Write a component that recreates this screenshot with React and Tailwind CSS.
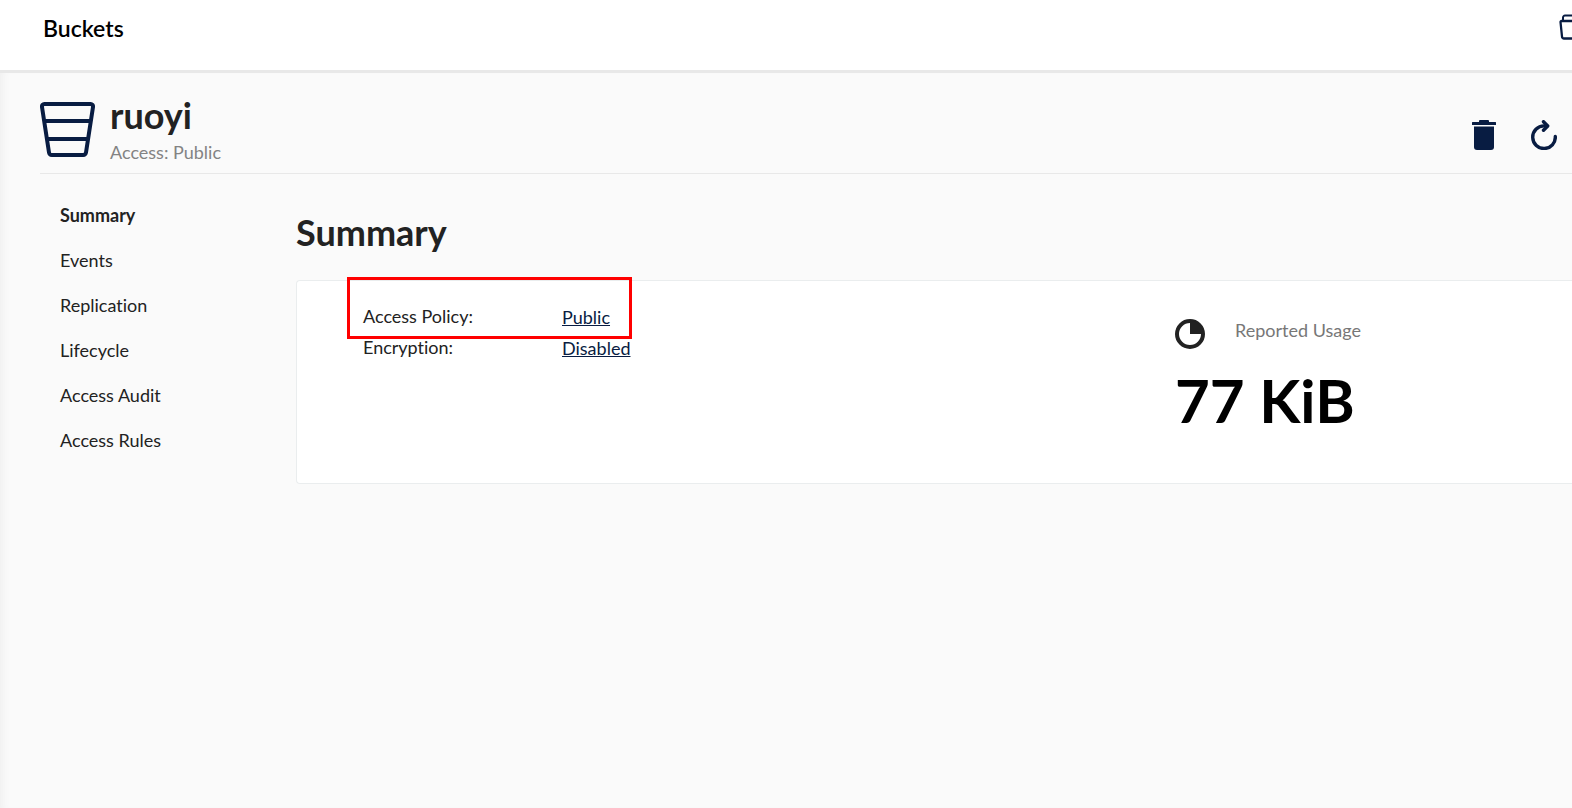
import React, { useState } from "react";

const navItems = [
  "Summary",
  "Events",
  "Replication",
  "Lifecycle",
  "Access Audit",
  "Access Rules",
];

const BucketIcon = () => (
  <svg width="55" height="55" viewBox="0 0 55 55" fill="none" stroke="#081c42" strokeWidth="4" strokeLinejoin="round">
    <path d="M4.5 2h46a2.5 2.5 0 0 1 2.5 3l-7 45.500a3 3 0 0 1-3 2.500H12a3 3 0 0 1-3-2.500L2 5a2.500 2.500 0 0 1 2.500-3z" />
    <path d="M4 19h47M7 37h41" />
  </svg>
);

const TrashIcon = () => (
  <svg width="24" height="30" viewBox="0 0 24 30" fill="#081c42">
    <path d="M7 1a1 1 0 0 1 1-1h8a1 1 0 0 1 1 1v1h6.500a.5.5 0 0 1 .5.5V5H0V2.500A.5.5 0 0 1 .5 2H7z" />
    <path d="M2 6.500h20V27a3 3 0 0 1-3 3H5a3 3 0 0 1-3-3z" />
  </svg>
);

const RefreshIcon = () => (
  <svg width="26" height="30" viewBox="0 0 26 30" fill="none" stroke="#081c42">
    <path d="M24.300 16.500A11.300 11.300 0 1 1 13 5.900h3" strokeWidth="3.400" strokeLinecap="round" />
    <path d="M12.500 1.700l4.200 4.300-4.200 4.300" strokeWidth="3.400" strokeLinecap="round" strokeLinejoin="round" />
  </svg>
);

const FilesIcon = () => (
  <svg width="30" height="26" viewBox="0 0 30 26" fill="none" stroke="#081c42" strokeWidth="2" strokeLinejoin="round">
    <path d="M4 7V3.500A2 2 0 0 1 6 1.500H15l3 2.500h8v3" />
    <path d="M2.500 7h25a1 1 0 0 1 1 1L27 22.500a2 2 0 0 1-2 2H5a2 2 0 0 1-2-2L1.500 8a1 1 0 0 1 1-1z" strokeWidth="2.300" />
  </svg>
);

const UsageIcon = () => (
  <svg width="30" height="30" viewBox="0 0 30 30">
    <circle cx="15" cy="15" r="13" fill="none" stroke="#222" strokeWidth="4" />
    <path d="M15 2a13 13 0 0 1 13 13H15z" fill="#222" />
  </svg>
);

const App = () => {
  const [active, setActive] = useState("Summary");

  return (
    <div className="min-h-screen flex flex-col overflow-hidden bg-[#fafafa] font-[Lato,sans-serif] [font-variant-ligatures:none] text-lg text-[#222]">
      {/* TOP BAR */}
      <header className="flex items-start justify-between bg-white border-b-3 border-[#e8e8e8] pl-[43px] h-[73px] pt-[14px]">
        <h1 className="text-[23px] leading-7 font-semibold text-black">Buckets</h1>
        <button aria-label="Object manager" className="-mr-[17px] cursor-pointer">
          <FilesIcon />
        </button>
      </header>

      <main className="flex-1 pl-10 shadow-[inset_8px_0_8px_-6px_#eeeeee]">
        {/* BUCKET HEADER */}
        <div className="flex items-start justify-between border-b border-[#e8e8e8] pt-6 pb-[5px] pr-[15px]">
          <div className="flex gap-[15px]">
            <div className="pt-[5px]">
              <BucketIcon />
            </div>
            <div>
              <h2 className="text-4xl leading-9 font-bold">ruoyi</h2>
              <p className="mt-[3px] leading-8 text-[#838383]">Access: Public</p>
            </div>
          </div>
          <div className="flex gap-[35px] pt-[23px]">
            <button aria-label="Delete bucket" className="cursor-pointer">
              <TrashIcon />
            </button>
            <button aria-label="Refresh" className="cursor-pointer">
              <RefreshIcon />
            </button>
          </div>
        </div>

        <div className="flex">
          <nav className="w-64 shrink-0 flex flex-col pt-[18px] pl-5">
            {navItems.map((item) => (
              <button
                key={item}
                onClick={() => setActive(item)}
                className={`h-[45px] text-left cursor-pointer ${
                  active === item ? "font-bold" : ""
                }`}
              >
                {item}
              </button>
            ))}
          </nav>

          <section className="flex-1 pt-[38px]">
            <h2 className="text-4xl leading-10 font-bold">Summary</h2>

            <div className="flex mt-7 min-h-[204px] bg-white border border-r-0 border-[#eaedee] rounded-l-sm pt-5 pl-[66px]">
              <div className="relative flex-1">
                <dl className="grid grid-cols-[199px_1fr] leading-[31px]">
                  <dt>Access Policy:</dt>
                  <dd className="pt-px -mb-px">
                    <a href="#policy" className="text-[#081c42] underline">Public</a>
                  </dd>
                  <dt>Encryption:</dt>
                  <dd className="pt-px -mb-px">
                    <a href="#encryption" className="text-[#081c42] underline">Disabled</a>
                  </dd>
                </dl>
                {/* highlight over the policy row */}
                <div className="absolute -left-4 -top-6 w-[285px] h-[62px] border-3 border-[#ff0000]" />
              </div>

              <div className="w-[397px] pt-[18px]">
                <div className="flex gap-[30px]">
                  <UsageIcon />
                  <span className="leading-[22px] text-[#777]">Reported Usage</span>
                </div>
                <div className="text-6xl leading-[70px] font-bold text-black mt-4">77 KiB</div>
              </div>
            </div>
          </section>
        </div>
      </main>
    </div>
  );
};

export default App;
